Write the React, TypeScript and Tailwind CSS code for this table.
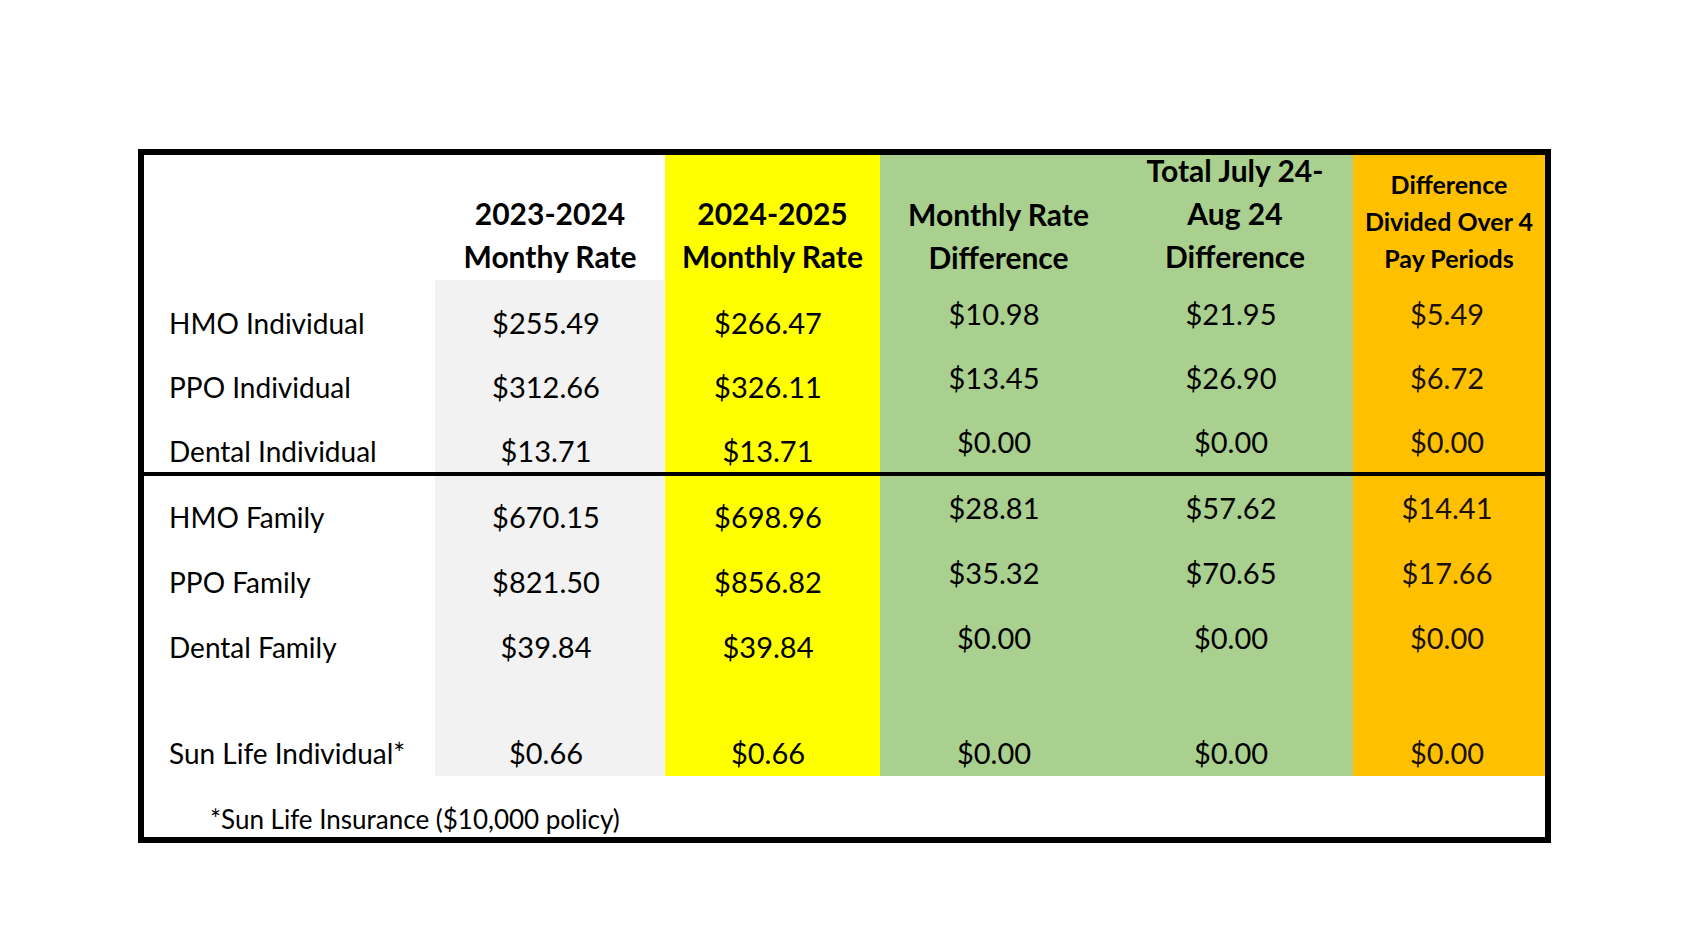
import React from "react";

type Row = { label: string; v: [string, string, string, string, string] };

const group1: Row[] = [
  { label: "HMO Individual", v: ["$255.49", "$266.47", "$10.98", "$21.95", "$5.49"] },
  { label: "PPO Individual", v: ["$312.66", "$326.11", "$13.45", "$26.90", "$6.72"] },
  { label: "Dental Individual", v: ["$13.71", "$13.71", "$0.00", "$0.00", "$0.00"] },
];

const group2: Row[] = [
  { label: "HMO Family", v: ["$670.15", "$698.96", "$28.81", "$57.62", "$14.41"] },
  { label: "PPO Family", v: ["$821.50", "$856.82", "$35.32", "$70.65", "$17.66"] },
  { label: "Dental Family", v: ["$39.84", "$39.84", "$0.00", "$0.00", "$0.00"] },
];

function DataRow({ row, h, low, high }: { row: Row; h: string; low: string; high: string }) {
  return (
    <>
      <div className={`${h} ${low} flex items-center pl-[25px] bg-white text-[28px]`}>{row.label}</div>
      <div className={`${h} ${low} flex items-center justify-center pr-[8px] bg-[#f2f2f2]`}>{row.v[0]}</div>
      <div className={`${h} ${low} flex items-center justify-center pr-[9px] bg-[#ffff00]`}>{row.v[1]}</div>
      <div className={`${h} ${high} flex items-center justify-center pr-[9px] bg-[#a9d08e]`}>{row.v[2]}</div>
      <div className={`${h} ${high} flex items-center justify-center pr-[8px] bg-[#a9d08e]`}>{row.v[3]}</div>
      <div className={`${h} ${high} flex items-center justify-center pr-[4px] bg-[#ffc000] text-[#1a1208]`}>{row.v[4]}</div>
    </>
  );
}

export default function App() {
  return (
    <div className="w-[1701px] h-[949px] bg-white pt-[149px] pl-[138px]" style={{ fontFamily: "Lato, 'Open Sans', sans-serif" }}>
      <div className="w-[1413px] h-[694px] border-[6px] border-black text-black">
        <div className="grid grid-cols-[291px_230px_215px_237px_236px_192px] text-[29px] leading-[40px]">
          {/* Header */}
          <div className="h-[125px] bg-white"></div>
          <div className="h-[125px] bg-white flex flex-col justify-end items-center pb-[2px] font-bold text-[30px] leading-[43px] text-center">
            <div>2023-2024</div>
            <div>Monthy Rate</div>
          </div>
          <div className="h-[125px] bg-[#ffff00] flex flex-col justify-end items-center pb-[2px] font-bold text-[30px] leading-[43px] text-center">
            <div>2024-2025</div>
            <div>Monthly Rate</div>
          </div>
          <div className="h-[125px] bg-[#a9d08e] flex flex-col justify-end items-center pb-[1px] font-bold text-[30px] leading-[43px] text-center">
            <div>Monthly Rate</div>
            <div>Difference</div>
          </div>
          <div className="h-[125px] bg-[#a9d08e] flex flex-col justify-end items-center pb-[2px] font-bold text-[30px] leading-[43px] text-center">
            <div>Total July 24-</div>
            <div>Aug 24</div>
            <div>Difference</div>
          </div>
          <div className="h-[125px] bg-[#ffc000] flex flex-col justify-end items-center pb-[3px] font-bold text-[25px] leading-[37px] text-center">
            <div>Difference</div>
            <div>Divided Over 4</div>
            <div>Pay Periods</div>
          </div>

          {group1.map((r) => (
            <DataRow key={r.label} row={r} h="h-[64px]" low="pt-[21px]" high="pt-[3px]" />
          ))}

          <div className="col-span-6 h-[4px] bg-black"></div>

          {group2.map((r) => (
            <DataRow key={r.label} row={r} h="h-[65px]" low="pt-[17px]" high="pb-[2px]" />
          ))}

          {/* Sun Life */}
          <div className="h-[105px] bg-white flex items-end pb-[3px] pl-[25px] text-[28px]">Sun Life Individual*</div>
          <div className="h-[105px] bg-[#f2f2f2] flex items-end justify-center pb-[3px] pr-[8px]">$0.66</div>
          <div className="h-[105px] bg-[#ffff00] flex items-end justify-center pb-[3px] pr-[9px]">$0.66</div>
          <div className="h-[105px] bg-[#a9d08e] flex items-end justify-center pb-[3px] pr-[9px]">$0.00</div>
          <div className="h-[105px] bg-[#a9d08e] flex items-end justify-center pb-[3px] pr-[8px]">$0.00</div>
          <div className="h-[105px] bg-[#ffc000] flex items-end justify-center pb-[3px] pr-[4px] text-[#1a1208]">$0.00</div>

          {/* Footer */}
          <div className="col-span-6 h-[61px] bg-white flex items-end pb-[2px] pl-[66px] text-[26px] leading-[32px]">
            *Sun Life Insurance ($10,000 policy)
          </div>
        </div>
      </div>
    </div>
  );
}
